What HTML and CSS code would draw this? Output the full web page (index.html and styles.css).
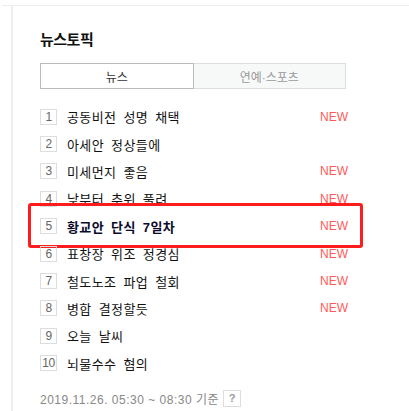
FILE: index.html
```html
<!DOCTYPE html>
<html lang="ko">
<head>
    <meta charset="UTF-8">
    <meta name="viewport" content="width=device-width, initial-scale=1.0">
    <title>뉴스토픽</title>
    <link rel="stylesheet" href="styles.css">
</head>
<body>
<div class="wrap">
    <div class="panel">
        <h2 class="title">뉴스토픽</h2>
        <div class="tabs">
            <a class="tab on">뉴스</a>
            <a class="tab">연예·스포츠</a>
        </div>
        <ol class="topics">
            <li><span class="num">1</span><span class="txt">공동비전 성명 채택</span><span class="new">NEW</span></li>
            <li><span class="num">2</span><span class="txt">아세안 정상들에</span></li>
            <li><span class="num">3</span><span class="txt">미세먼지 좋음</span><span class="new">NEW</span></li>
            <li><span class="num">4</span><span class="txt">낮부터 추위 풀려</span><span class="new">NEW</span></li>
            <li class="hot"><span class="num">5</span><span class="txt">황교안 단식 7일차</span><span class="new">NEW</span></li>
            <li><span class="num">6</span><span class="txt">표창장 위조 정경심</span><span class="new">NEW</span></li>
            <li><span class="num">7</span><span class="txt">철도노조 파업 철회</span><span class="new">NEW</span></li>
            <li><span class="num">8</span><span class="txt">병합 결정할듯</span><span class="new">NEW</span></li>
            <li><span class="num">9</span><span class="txt">오늘 날씨</span></li>
            <li><span class="num">10</span><span class="txt">뇌물수수 혐의</span></li>
        </ol>
        <p class="stamp">2019.11.26. 05:30 ~ 08:30 기준 <span class="help">?</span></p>
    </div>
</div>
</body>
</html>
```

FILE: styles.css
```css
*{margin:0;padding:0;box-sizing:border-box;}
body{background:#fff;font-family:"Liberation Sans","Noto Sans CJK KR",sans-serif;color:#111;}
.wrap{margin:5px 0 0 2px;border-top:1px solid #eee;}
.panel{position:relative;margin-left:9px;border-left:2px solid #eee;padding:24px 0 0 27px;height:406px;}
.title{font-size:15px;font-weight:bold;line-height:20px;color:#111;letter-spacing:-0.5px;}
.tabs{display:flex;width:306px;height:26px;margin-top:13px;}
.tab{flex:1;display:flex;align-items:center;justify-content:center;font-size:12px;color:#999;background:#f7f9f9;border:1px solid #ddd;border-left:none;}
.tab.on{color:#333;background:#fff;border:1px solid #bbb;}
.topics{list-style:none;margin-top:14px;width:308px;}
.topics li{position:relative;display:flex;align-items:center;height:27.4px;}
.num{display:flex;align-items:center;justify-content:center;width:17px;height:16px;border:1px solid #ddd;font-size:12px;color:#666;letter-spacing:-0.5px;}
.txt{margin-left:10px;font-size:13px;letter-spacing:0.4px;word-spacing:3px;color:#111;}
.new{margin-left:auto;font-size:12px;color:#ff5a5a;}
.hot .txt{font-weight:bold;color:#0a0a2a;}
.hot::after{content:"";position:absolute;left:-12px;right:-15px;top:-10px;bottom:-8px;border:3px solid #ff1c1c;border-radius:3px;}
.stamp{display:flex;align-items:center;margin-top:13px;font-size:12px;letter-spacing:0.5px;color:#888;}
.help{display:inline-flex;align-items:center;justify-content:center;width:18px;height:17px;margin-left:4px;border:1px solid #ddd;font-size:11px;font-weight:bold;color:#999;letter-spacing:0;}
```
